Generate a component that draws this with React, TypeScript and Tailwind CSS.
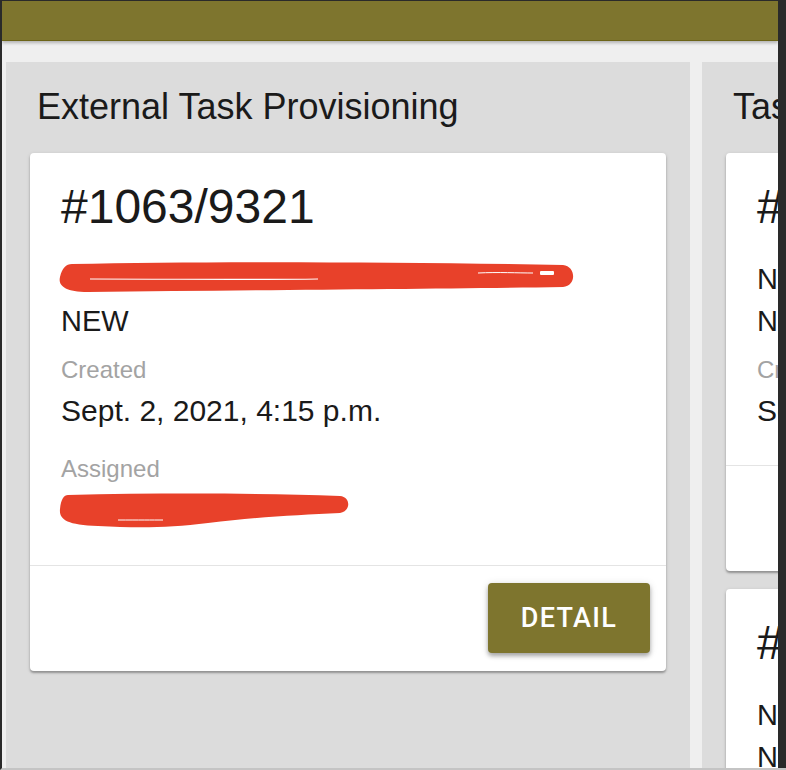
import React from "react";

const sans = { fontFamily: '"Liberation Sans", Arial, sans-serif' };

const ScribbleLong = () => (
  <svg
    className="absolute left-[-3px] top-[3px]"
    width="518"
    height="32"
    viewBox="0 0 518 32"
  >
    <path
      d="M14 3 C150 0 350 1 505 4 C518 5 519 25 505 26 C380 28 200 29 30 31 C6 31 0 24 2 16 C4 7 8 3 14 3 Z"
      fill="#e8412a"
    />
    <path d="M32 18 C120 18 200 19 260 18" stroke="#ffffff" strokeWidth="1.2" fill="none" />
    <path d="M420 12 C440 11 460 12 475 12" stroke="#ffffff" strokeWidth="1" fill="none" />
    <rect x="482" y="10" width="14" height="4" rx="1" fill="#ffffff" />
  </svg>
);

const ScribbleShort = () => (
  <svg
    className="absolute left-[-3px] top-[3px]"
    width="292"
    height="36"
    viewBox="0 0 292 36"
  >
    <path
      d="M10 2 C100 0 200 0 282 3 C293 4 293 18 282 20 C240 22 200 24 150 30 C110 35 80 35 40 33 C8 32 1 26 2 16 C3 6 6 2 10 2 Z"
      fill="#e8412a"
    />
    <path d="M60 27 C80 27 95 27 105 27" stroke="#ffffff" strokeWidth="1" fill="none" />
  </svg>
);

interface TaskCardProps {
  number: string;
  name?: string;
  status: string;
  created: string;
  assigned?: boolean;
  redactName?: boolean;
}

const TaskCard: React.FC<TaskCardProps> = ({
  number,
  name,
  status,
  created,
  assigned,
  redactName,
}) => {
  return (
    <div className="w-[636px] rounded-[4px] bg-white shadow-[0_2px_2px_rgba(0,0,0,0.28),0_1px_4px_rgba(0,0,0,0.12)]">
      <div className="px-[31px] pt-[27px] pb-[33px] text-[#1a1a1a]" style={sans}>
        <div className="text-[48px] leading-[54px]">{number}</div>
        <div className="relative mt-[24px] h-[42px] text-[29px] leading-[42px] whitespace-nowrap">
          {redactName ? <ScribbleLong /> : name}
        </div>
        <div className="text-[29px] leading-[42px]">{status}</div>
        <div className="mt-[13px] text-[24px] leading-[30px] text-[#a3a3a3]">
          Created
        </div>
        <div className="mt-[5px] text-[30px] leading-[42px] whitespace-nowrap">{created}</div>
        {assigned && (
          <>
            <div className="mt-[22px] text-[24px] leading-[30px] text-[#a3a3a3]">
              Assigned
            </div>
            <div className="relative mt-[6px] h-[42px]">
              <ScribbleShort />
            </div>
          </>
        )}
      </div>
      <div className="flex justify-end border-t border-[#e4e4e4] px-[16px] pt-[17px] pb-[18px]">
        <button
          className="flex h-[70px] w-[162px] items-center justify-center rounded-[4px] bg-[#7e752e] text-[27px] font-medium uppercase tracking-[0.05em] text-white shadow-[0_3px_4px_rgba(0,0,0,0.3),0_1px_8px_rgba(0,0,0,0.12)]"
          style={{ fontFamily: "Roboto, Arial, sans-serif" }}
        >
          Detail
        </button>
      </div>
    </div>
  );
};

const Column: React.FC<{ title: string; children: React.ReactNode }> = ({
  title,
  children,
}) => (
  <section className="w-[684px] shrink-0 bg-[#dcdcdc] px-[24px] pt-[24px]">
    <h2
      className="mb-[25px] ml-[7px] text-[36px] leading-[42px] text-[#1a1a1a] whitespace-nowrap"
      style={sans}
    >
      {title}
    </h2>
    <div className="flex flex-col gap-[18px]">{children}</div>
  </section>
);

export default function App() {
  return (
    <div className="flex h-[770px] w-[786px] overflow-hidden border-t border-l-2 border-b-2 border-t-[#2a2a2a] border-l-[#2a2a2a] border-b-[#c4c4c4] bg-[#efefef]">
      <div className="flex min-w-0 flex-1 flex-col overflow-hidden">
        <header className="relative z-10 h-[40px] shrink-0 border-b border-[#6c6418] bg-[#7e752e] shadow-[0_2px_3px_rgba(0,0,0,0.25)]" />
        <main className="flex flex-1 gap-[12px] pl-[4px] pt-[21px]">
          <Column title="External Task Provisioning">
            <TaskCard
              number="#1063/9321"
              status="NEW"
              created="Sept. 2, 2021, 4:15 p.m."
              assigned
              redactName
            />
          </Column>
          <Column title="Task Provisioning">
            <TaskCard
              number="#1064/9322"
              name="Network Upgrade"
              status="NEW"
              created="Sept. 2, 2021, 4:20 p.m."
            />
            <TaskCard
              number="#1065/9323"
              name="Network Check"
              status="NEW"
              created="Sept. 3, 2021, 9:05 a.m."
            />
          </Column>
        </main>
      </div>
      <div className="w-[8px] shrink-0 bg-[#2a2a2a]" />
    </div>
  );
}
